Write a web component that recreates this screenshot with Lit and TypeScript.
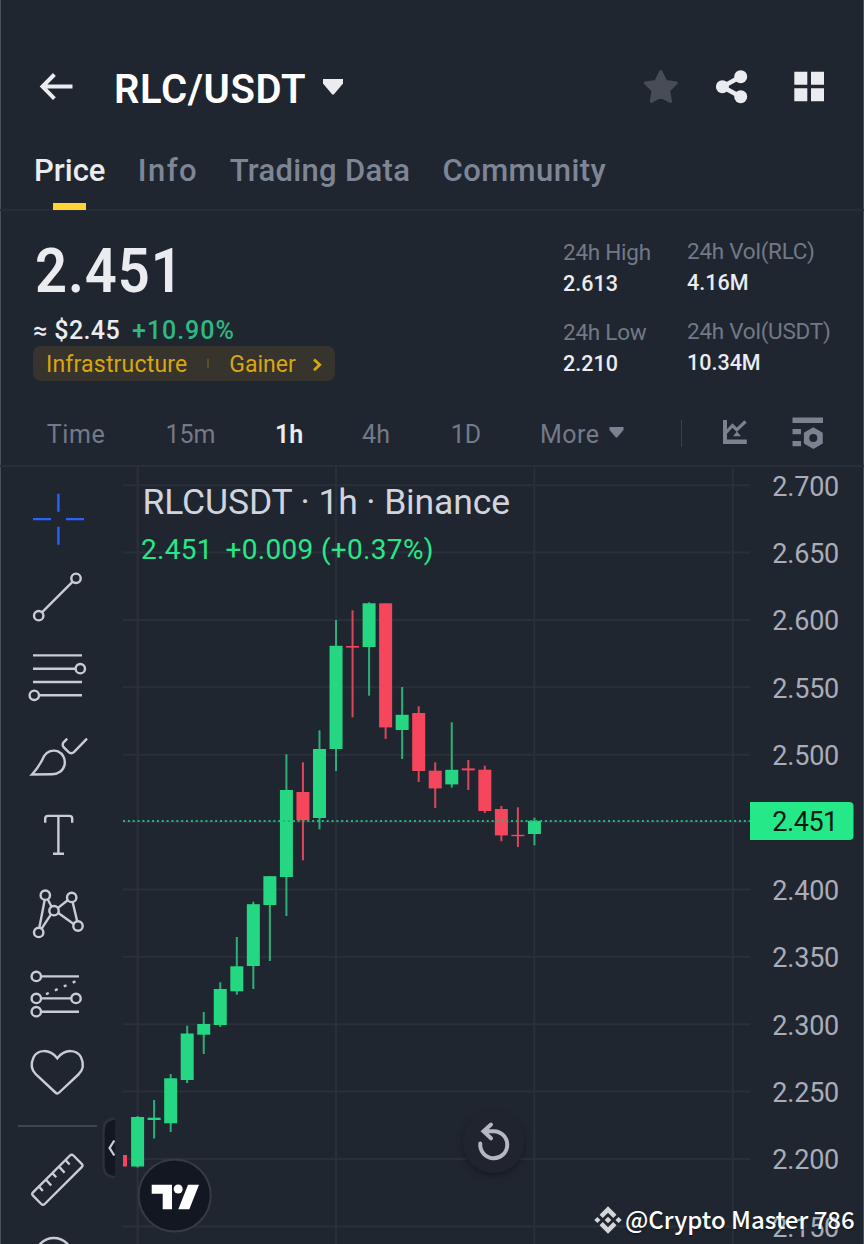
import { LitElement, html, svg, css } from "lit";
import { customElement } from "lit/decorators.js";

type Candle = [up: number, high: number, top: number, bottom: number, low: number];

const CANDLES: Candle[] = [
  [1, 1116, 1117, 1166.5, 1167.5],
  [1, 1100, 1117.7, 1120, 1138.5],
  [1, 1074, 1078.3, 1123.3, 1132],
  [1, 1025.7, 1033.5, 1080, 1083],
  [1, 1012, 1024, 1034.7, 1054],
  [1, 982.3, 989, 1025, 1027],
  [1, 937, 966.3, 991.3, 994.7],
  [1, 901.7, 904.2, 966, 989],
  [1, 876, 876.2, 905, 961],
  [1, 754.3, 790, 877, 916],
  [0, 762.3, 792, 820.3, 860.3],
  [1, 730.3, 749, 818, 829.3],
  [1, 620, 645.8, 749, 771],
  [0, 610.3, 646, 647.6, 717.3],
  [1, 602.3, 603.3, 647, 695.7],
  [0, 603.3, 603.3, 727.4, 739],
  [1, 687, 714.8, 730, 759],
  [0, 706.3, 713, 771, 782],
  [0, 762.3, 770.7, 788.4, 808],
  [1, 722.3, 769.8, 784.4, 787.5],
  [0, 760, 768.4, 770.4, 790],
  [0, 765.7, 769.7, 811, 813],
  [0, 806, 809, 835.4, 841.3],
  [0, 807.3, 834.8, 836.2, 847],
  [1, 817.7, 820.8, 834, 845.3],
];

const TICKS = ["2.700", "2.650", "2.600", "2.550", "2.500", "", "2.400", "2.350", "2.300", "2.250", "2.200", "2.150"];

const dot = (x: number, y: number) => svg`<circle cx=${x} cy=${y} r="4.7"/>`;

const TOOLS = [
  svg`<path class="blue" d="M58.4 494V512M58.4 527V545M33 519.4H51M66 519.4H84"/>`,
  svg`${dot(38.7, 616)}${dot(76, 578.6)}<path d="M42 612.7L72.7 582"/>`,
  svg`<path d="M33 655.7H82M33 669H75.5M33 682.3H82M39 695.6H82"/>${dot(80.3, 669)}${dot(34.3, 695.6)}`,
  svg`<path d="M32 774.8C38 768.5 41 763 44 756.500C47 751.500 53 749.800 58 751.600C63 753.700 65.600 759.500 64.600 765C63.400 771 58 774.600 52 774.600ZM67.200 739L63.600 742.600Q61.800 745 63.600 747.400L68.400 752.200Q71.200 754.800 74.200 752.200L87 739"/>`,
  svg`<path d="M45.200 823V819Q45.200 816.200 48 816.200H69.400Q72.200 816.200 72.200 819V823M58.400 816.200V854M53 854H64"/>`,
  svg`${dot(45.3, 895.5)}${dot(71.7, 897.7)}${dot(54, 911)}${dot(38.7, 932.7)}${dot(78, 926.3)}<path d="M44.700 900.200L39.300 928M47.700 899.500L51.600 907M58 908.200L67.700 900.500M72.600 902.300L77.200 921.600M58.300 913.300L73.700 924.200M51 914.600L41.600 929"/>`,
  svg`${dot(36.3, 976.7)}${dot(36.3, 998.7)}${dot(76, 998.7)}${dot(36.3, 1012)}<path d="M41 976.700H79M41 998.700H71.300M41 1012H79"/><path stroke-dasharray="3 6.700" d="M46 994.500L77 981"/>`,
  svg`<path d="M57.300 1058.600C49.500 1048.500 37.500 1049.800 33.600 1057.500C30.500 1064 31.600 1070.500 36 1074.800L55.400 1092.800Q57.300 1094.600 59.200 1092.800L78.400 1074.800C83 1070.500 84 1064 81 1057.500C77 1049.800 65 1048.500 57.300 1058.600Z"/>`,
];

@customElement("tool-rail")
export class ToolRail extends LitElement {
  static styles = css`
    :host { display: flex; flex-direction: column; width: 123px; flex: none; position: relative; }
    svg { display: block; fill: none; stroke: #c9ccd6; stroke-width: 2.4; }
    .blue { stroke: #2962ff; stroke-width: 2.4; }
    .rule { width: 79px; height: 2px; margin: 14px 0 0 18px; background: #404650; flex: none; }
    .first { margin-top: 12px; }
    .handle { position: absolute; left: 101px; top: 649px; }
  `;
  render() {
    return html`
      ${TOOLS.map((t, i) => html`<svg class=${i === 0 ? "first" : ""} width="123" height="79" viewBox="0 ${479.3 + i * 79} 123 79">${t}</svg>`)}
      <div class="rule"></div>
      <svg width="123" height="90" viewBox="0 1127 123 90">
        <path d="M70 1155.500Q71.700 1153.800 73.400 1155.500L81.700 1163.800Q83.400 1165.500 81.700 1167.200L44.700 1204Q43 1205.700 41.300 1204L33 1195.700Q31.300 1194 33 1192.300ZM39 1186.500L42.800 1191M46 1179.800L51.200 1185.500M52.500 1173.200L56.200 1177.300M59 1166.600L64.600 1172.700M65.500 1160L69.600 1164.500"/>
      </svg>
      <svg width="123" height="27" viewBox="0 1217 123 27"><circle cx="53.800" cy="1256.500" r="18.500"/></svg>
      <svg class="handle" width="15" height="64" viewBox="101 1116 15 64">
        <path stroke="none" fill="#131722" d="M115 1118.500Q103.500 1119 103.500 1131V1165Q103.500 1177 115 1177Z"/>
        <path stroke="#2c313b" d="M115 1118.500Q103.500 1119 103.500 1131V1165Q103.500 1177 115 1177"/>
        <path stroke-width="2.300" d="M114.300 1140.500L109.600 1148L114.300 1155.500"/>
      </svg>`;
  }
}

@customElement("candle-chart")
export class CandleChart extends LitElement {
  static styles = css`
    :host { display: block; width: 741px; flex: none; }
    svg { display: block; font-family: Roboto, sans-serif; }
    .grid { stroke: #2a3039; stroke-width: 2; }
    .up { fill: #25d782; }
    .up.wick { fill: #2cb079; }
    .down { fill: #f6465d; }
    .down.wick { fill: #dd4659; }
    .last { stroke: #24b777; stroke-width: 2; stroke-dasharray: 2 2.850; }
    .tick { font-size: 27px; fill: #a9adb8; }
    .badge { fill: #25e988; }
    .now { font-size: 27px; fill: #0b1a14; }
    .name { font-size: 35.500px; fill: #d1d4dc; }
    .change { font-size: 28px; fill: #25e988; }
    .shade { filter: drop-shadow(0 3px 3px rgba(10, 12, 18, 0.5)); }
  `;
  render() {
    const step = 16.535;
    return html`<svg width="741" height="777" viewBox="123 467 741 777">
      <g class="grid">
        ${TICKS.map((_, i) => svg`<path d="M123 ${485.2 + i * 67.38}H750"/>`)}
        ${[137.6, 336, 534.4, 732.8].map((x) => svg`<path d="M${x} 466V1244"/>`)}
      </g>
      <rect class="down" x="123" y="1155" width="4" height="11.500"/>
      ${CANDLES.map(([up, high, top, bottom, low], i) => {
        const x = 137.6 + i * step;
        const tone = up ? "up" : "down";
        return svg`<rect class="${tone} wick" x=${x - 1} y=${high} width="2" height=${low - high}/>
          <rect class=${tone} x=${x - 6.5} y=${top} width="13" height=${bottom - top}/>`;
      })}
      <path class="last" d="M123 821H750"/>
      <text class="name" x="142.500" y="514" textLength="367.500">RLCUSDT · 1h · Binance</text>
      <text class="change" x="141" y="559.200" textLength="71.500">2.451</text>
      <text class="change" x="225.500" y="559.200" textLength="208">+0.009 (+0.37%)</text>
      ${TICKS.map((t, i) => svg`<text class="tick" x="772.300" y=${495.600 + i * 67.38} textLength="67">${t}</text>`)}
      <path class="badge" d="M750 802H849Q853.500 802 853.500 806V836Q853.500 840 849 840H750Z"/>
      <text class="now" x="772.300" y="831" textLength="66">2.451</text>
      <circle class="shade" cx="493.600" cy="1142" r="31" fill="#20242f"/>
      <path fill="none" stroke="#b5b8c1" stroke-width="4" stroke-linecap="round" d="M480.300 1143.500A13.500 13.500 0 1 0 493.800 1131.300H484.500M491 1124.500L483.500 1131.300L491 1138.300"/>
      <circle cx="174.700" cy="1195.500" r="36" fill="#131722" stroke="#363a45" stroke-width="2"/>
      <path fill="#fff" d="M151.700 1184.700H172V1209.200H162.700V1193.800H151.700ZM188 1184.700H199L189.300 1209.200H178.300Z"/>
      <circle cx="178.200" cy="1189" r="4.500" fill="#fff"/>
    </svg>`;
  }
}

@customElement("app-root")
export class AppRoot extends LitElement {
  static styles = css`
    :host { display: block; position: relative; box-sizing: border-box; width: 864px; height: 1244px; overflow: hidden;
      background: #202630; color: #eaecef; font-family: Roboto, sans-serif; white-space: nowrap;
      box-shadow: inset 1px 0 #4a505a, inset -1px 0 #4a505a; }
    svg { display: block; flex: none; }
    .head { display: flex; align-items: center; height: 74px; padding: 50px 39px 0 38px; }
    .pair { margin-left: 40px; font-size: 40px; font-weight: 600; letter-spacing: 0.600px; width: 192px; color: #fff; line-height: 48px; padding-top: 5px; }
    .caret { margin-left: 16px; }
    .star { margin-left: auto; }
    .share { margin-left: 37px; }
    .apps { margin-left: 45px; }
    .head .apps, .head .star { margin-bottom: 1px; }
    .tabs { display: flex; height: 87px; padding-left: 34px; gap: 33px; border-bottom: 2px solid #272d37; box-sizing: border-box; font-size: 31px; font-weight: 500; line-height: 94px; color: #7e8696; }
    .tab { display: flex; flex-direction: column; align-items: center; height: 85px; }
    .tab.on { color: #eaecef; }
    .bar { width: 33px; height: 7px; margin-top: -15px; background: #fcd535; flex: none; }
    .info { letter-spacing: 1.400px; width: 59px; }
    .data { letter-spacing: 0.300px; width: 179px; }
    .comm { letter-spacing: 0.450px; }
    .summary { display: flex; height: 191px; }
    .left { width: 563px; padding-left: 33px; box-sizing: border-box; }
    .price { font-size: 61px; font-weight: 600; line-height: 70px; margin: 25px 0 0 2px; letter-spacing: 1px; transform: scaleX(0.92); transform-origin: 0 50%; }
    .fiat { display: flex; gap: 12px; font-size: 25px; font-weight: 500; line-height: 30px; margin-top: 10px; letter-spacing: 0.400px; }
    .gain { letter-spacing: 0.950px; color: #2eb983; }
    .tags { display: flex; align-items: center; width: 302px; height: 35px; box-sizing: border-box; padding: 2px 13px 0 13px; border-radius: 8px; background: #36342d; color: #d9a60f; font-size: 23px; }
    .t1 { width: 162px; letter-spacing: 0.200px; }
    .t2 { width: 84px; margin-left: 20px; letter-spacing: 0; }
    .split { width: 2px; height: 9px; margin-bottom: 3px; background: #5d4f26; }
    .stats { display: grid; grid-template-columns: 124px 170px; grid-template-rows: 80px 80px; padding-top: 24px; }
    .stat { font-size: 22.500px; line-height: 32px; color: #727986; padding-top: 1px; letter-spacing: -0.250px; }
    .stat.raise { padding-top: 0; }
    .num { color: #eaecef; font-weight: 500; font-size: 21.500px; line-height: 31px; letter-spacing: 0; }
    .times { display: grid; grid-template-columns: 116px 113px 84px 90px 90px 29px auto auto auto auto; height: 65px; padding-left: 18px; align-items: center; border-bottom: 2px solid #282e37; box-sizing: border-box; font-size: 25px; color: #737a88; justify-content: start; text-align: center; padding-top: 1px; }
    .times .wide { letter-spacing: 0.600px; }
    .sel { color: #eaecef; font-weight: 600; }
    .more { display: flex; align-items: center; gap: 9px; width: 141px; grid-column: 7; letter-spacing: 0.500px; }
    .caret2 { margin-bottom: 4px; }
    .vbar { width: 1px; height: 27px; margin-bottom: 2px; background: #3a404b; }
    .i1 { margin: 0 0 2px 40px; }
    .i2 { margin: 0 0 2px 44px; }
    .body { display: flex; height: 777px; }
    .mark { position: absolute; left: 594px; top: 1202px; display: flex; align-items: center; gap: 3px; font: 500 24px/34px "Noto Sans CJK SC", sans-serif; color: #fff; text-shadow: 0 1px 2px #0008; }
    .mark svg { margin-top: 2px; }
  `;
  render() {
    return html`
      <div class="head">
        <svg width="36" height="30" viewBox="38 72 36 30" fill="none" stroke="#eaecef" stroke-width="4"><path d="M72.500 86.600H43M54.400 74.500L42.500 86.600L54.400 98.600"/></svg>
        <div class="pair">RLC/USDT</div>
        <svg class="caret" width="22" height="18" viewBox="322 78 22 18"><path fill="#eaecef" d="M323 79H343V83.500L334.200 94Q333 95.300 331.800 94L323 83.500Z"/></svg>
        <svg class="star" width="35" height="35" viewBox="643 69 35 35"><path fill="#474d57" stroke="#474d57" stroke-width="3" stroke-linejoin="round" d="M660.800 71.500L665.700 81.400L676.300 83L668.600 90.600L670.500 101.300L660.800 96.300L651.300 101.300L653.100 90.600L645.400 83L656 81.400Z"/></svg>
        <svg class="share" width="34" height="36" viewBox="715 69 34 36" fill="#eaecef"><path stroke="#eaecef" stroke-width="4.500" fill="none" d="M741 76.500L722.500 86.700L741 97"/><circle cx="740.700" cy="76.700" r="6.500"/><circle cx="722.400" cy="86.700" r="6.500"/><circle cx="740.700" cy="96.700" r="6.500"/></svg>
        <svg class="apps" width="31" height="31" viewBox="794 71 31 31" fill="#eaecef"><path d="M794.300 71.700H807.300V84.700H794.300ZM811 71.700H824V84.700H811ZM794.300 88.300H807.300V101.300H794.300ZM811 88.300H824V101.300H811Z"/></svg>
      </div>
      <div class="tabs">
        <div class="tab on">Price<div class="bar"></div></div>
        <div class="tab info">Info</div>
        <div class="tab data">Trading Data</div>
        <div class="tab comm">Community</div>
      </div>
      <div class="summary">
        <div class="left">
          <div class="price">2.451</div>
          <div class="fiat"><span>≈ $2.45</span><span class="gain">+10.90%</span></div>
          <div class="tags"><span class="t1">Infrastructure</span><span class="split"></span><span class="t2">Gainer</span>
            <svg width="9" height="14" viewBox="313 357 9 14" fill="none" stroke="#d9a60f" stroke-width="2.800"><path d="M314 358.500L319.700 363.800L314 369.200"/></svg></div>
        </div>
        <div class="stats">
          <div class="stat">24h High<div class="num">2.613</div></div>
          <div class="stat raise">24h Vol(RLC)<div class="num">4.16M</div></div>
          <div class="stat">24h Low<div class="num">2.210</div></div>
          <div class="stat raise">24h Vol(USDT)<div class="num">10.34M</div></div>
        </div>
      </div>
      <div class="times">
        <span class="wide">Time</span><span>15m</span><span class="sel">1h</span><span>4h</span><span>1D</span>
        <div class="more">More<svg class="caret2" width="15" height="13" viewBox="609 425 15 13"><path fill="#7b8290" d="M609.500 426H623.500V429L617.300 436.300Q616.500 437 615.700 436.300L609.500 429Z"/></svg></div>
        <div class="vbar"></div>
        <svg class="i1" width="26" height="28" viewBox="723 419 26 28"><path fill="#7b8290" d="M724 420H728V439.500H747.800V444H724ZM734 436.200L738 431.500L742 436.200Z"/><path fill="none" stroke="#7b8290" stroke-width="3.200" d="M727 432.500L733.500 425.500L737.800 429.800L746.500 421.500"/></svg>
        <svg class="i2" width="32" height="32" viewBox="793 417 32 32"><path fill="#7b8290" fill-rule="evenodd" d="M793.500 417.500H824V423H793.500ZM793.500 429H802V434.300H793.500ZM793.500 441H802V446.300H793.500ZM814.300 427.200L823.800 432.700V443.500L814.300 449L804.900 443.500V432.700ZM814.300 434A4 4 0 1 0 814.300 442A4 4 0 1 0 814.300 434Z"/></svg>
      </div>
      <div class="body"><tool-rail></tool-rail><candle-chart></candle-chart></div>
      <div class="mark">
        <svg width="28" height="30" viewBox="-14 -15 28 30" fill="#d5d6d9"><path d="M-8.500 -5.300L0 -13.800L8.500 -5.300L5.200 -2L0 -7.200L-5.200 -2ZM-8.500 5.300L0 13.800L8.500 5.300L5.200 2L0 7.200L-5.200 2ZM0 -3.300L3.300 0L0 3.300L-3.300 0ZM-10.600 -3.100L-7.500 0L-10.600 3.100L-13.700 0ZM10.600 -3.100L13.700 0L10.600 3.100L7.500 0Z"/></svg>
        <span>@Crypto Master 786</span>
      </div>`;
  }
}
